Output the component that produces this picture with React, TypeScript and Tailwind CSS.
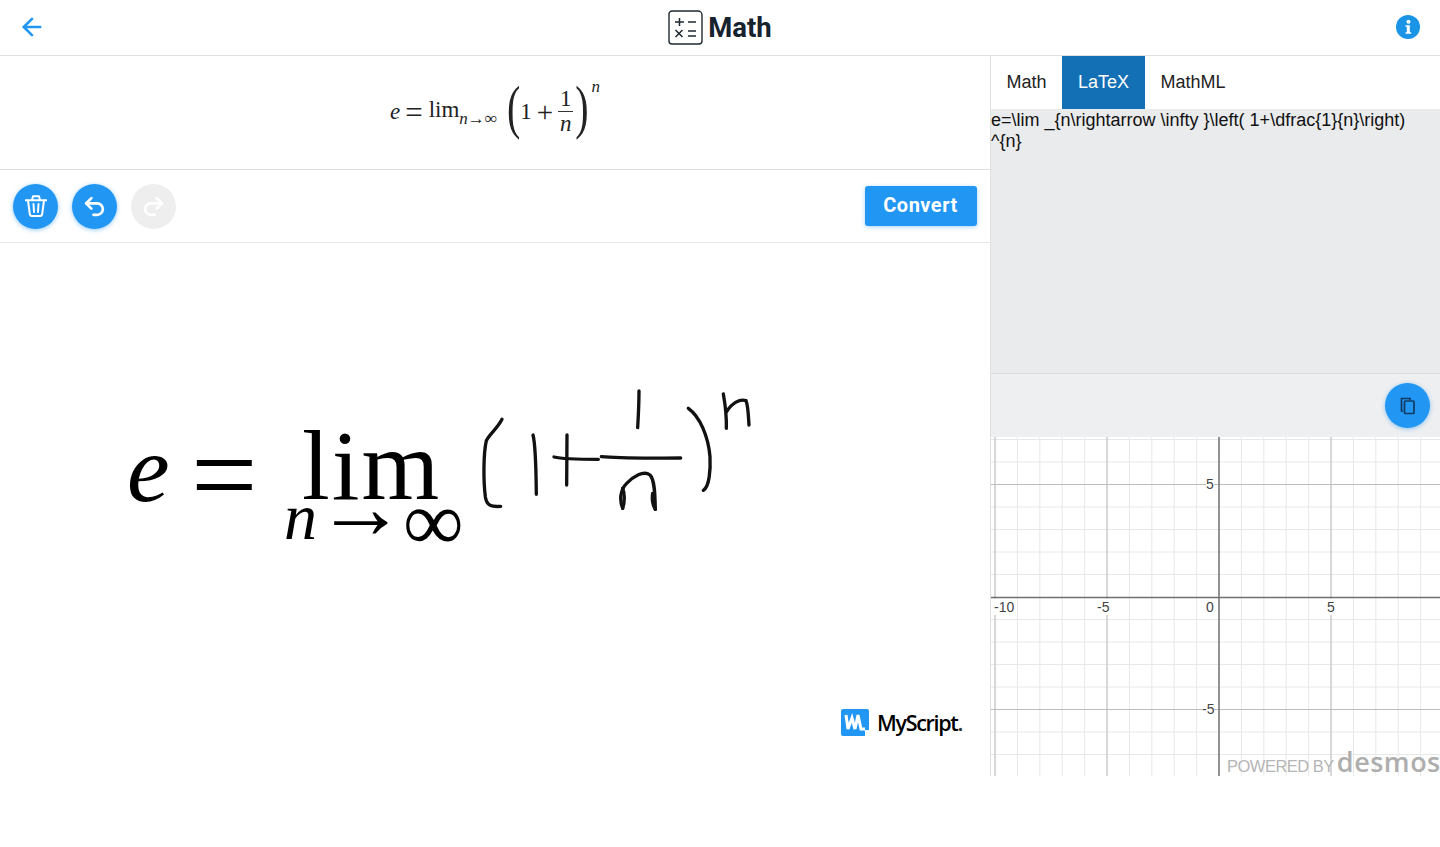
import React from 'react'
import { ArrowLeft, Redo2, Undo2 } from 'lucide-react'

function CalcIcon() {
  return (
    <svg width="35" height="35" viewBox="0 0 35 35" fill="none" stroke="#1f2933" strokeWidth="1.4">
      <path d="M4 1h26a4 4 0 0 1 4 4v26a3 3 0 0 1-3 3H4a3 3 0 0 1-3-3V4a3 3 0 0 1 3-3z" />
      <path d="M7 12h9M11.500 8v8M20 12h8M7.500 20l7 7M14.500 20l-7 7M20 21h8M20 26h8" strokeWidth="1.500" />
    </svg>
  )
}

function InfoIcon() {
  return (
    <svg width="24" height="24" viewBox="0 0 24 24">
      <circle cx="12" cy="12" r="12" fill="#1a94e6" />
      <circle cx="12.500" cy="6.800" r="2" fill="#fff" />
      <path d="M9.500 10.200h4.300v7h1.400v1.600H9.500v-1.600h1.300v-5.400H9.500z" fill="#fff" />
    </svg>
  )
}

function CopyIcon() {
  return (
    <svg width="16" height="18" viewBox="0 0 16 18" fill="none" stroke="#123a63" strokeWidth="1.700">
      <path d="M3 14H1.500V1.500H10V3" />
      <rect x="4.500" y="4" width="9.500" height="12.500" rx="1" />
    </svg>
  )
}

function TrashIcon() {
  return (
    <svg width="22" height="22" viewBox="0 0 22 22" fill="none" stroke="#fff" strokeWidth="2" strokeLinecap="round" strokeLinejoin="round">
      <path d="M0.800 5.300h20.400" />
      <path d="M7 5l1-3.800h6l1 3.800" />
      <path d="M3 5.500l1.800 13.500q.4 2 2.200 2h8q1.800 0 2.200-2L19 5.500" />
      <path d="M8.500 9l.5 8M13.500 9l-.5 8" />
    </svg>
  )
}

function Ink() {
  return (
    <svg
      className="absolute left-[470px] top-[137px]"
      width="300"
      height="150"
      viewBox="0 0 900 450"
      fill="none"
      stroke="#111"
      strokeWidth="10"
      strokeLinecap="round"
      strokeLinejoin="round"
    >
      <path d="M96 118C82 146 60 160 49 182C40 222 40 300 46 350C50 378 65 381 92 379" />
      <path d="M189 165C198 200 198 280 199 343" />
      <path d="M252 231C280 238 340 238 385 238" />
      <path d="M291 165C291 210 290 270 290 315" />
      <path d="M394 230C450 236 550 234 632 234" />
      <path d="M507 33C507 70 505 110 503 143" />
      <path d="M458 385C448 360 450 330 470 310C490 290 520 270 540 285C555 300 555 350 556 388" />
      <path d="M458 385C464 370 465 340 458 325M548 340C545 360 548 375 556 388" />
      <path d="M655 85C690 110 715 170 720 230C722 270 718 320 700 331" />
      <path d="M760 42C765 70 770 110 769 145M770 95C785 70 810 55 828 62C835 80 835 110 837 135" />
    </svg>
  )
}

function Preview() {
  return (
    <div className="h-[114px] border-b border-[#e0e0e0] flex items-center justify-center font-['Liberation_Serif',serif] text-[23px] text-[#222]">
      <i>e</i>
      <span className="text-[31px] leading-none ml-[5px] mr-[6px]">=</span>
      <span className="mt-[-5px]">lim</span>
      <i className="text-[17px] mt-[12px] whitespace-nowrap">n→∞</i>
      <span className="inline-block text-[40px] leading-none ml-[10px] mt-[-12px] scale-y-150">(</span>
      <span>1</span>
      <span className="text-[29px] leading-none mx-[5px]">+</span>
      <span className="flex flex-col items-center leading-[24px] w-[15px] mt-[-2px]">
        <span className="border-b border-[#333] w-full text-center">1</span>
        <i>n</i>
      </span>
      <span className="inline-block text-[40px] leading-none ml-[2px] mt-[-12px] scale-y-150">)</span>
      <i className="text-[17px] mb-[52px] ml-[3px]">n</i>
    </div>
  )
}

function Toolbar() {
  return (
    <div className="h-[73px] border-b border-[#e6e6e6] flex items-center pl-[13px] pr-[13.500px]">
      <button className="w-[45px] h-[45px] rounded-full bg-[#2196f3] shadow-[0_1px_4px_rgba(33,150,243,0.5)] flex items-center justify-center">
        <TrashIcon />
      </button>
      <button className="w-[45px] h-[45px] ml-[14px] rounded-full bg-[#2196f3] shadow-[0_1px_4px_rgba(33,150,243,0.5)] flex items-center justify-center text-white">
        <Undo2 size={25} strokeWidth={2.600} />
      </button>
      <button className="w-[45px] h-[45px] ml-[14px] rounded-full bg-[#eeeeee] flex items-center justify-center text-white">
        <Redo2 size={25} strokeWidth={2.600} />
      </button>
      <button className="ml-auto w-[112px] h-[40px] pb-[2px] rounded-[3px] bg-[#2196f3] shadow-[0_1px_4px_rgba(33,150,243,0.4)] text-white text-[20px] font-bold tracking-[0.5px] font-['Roboto',sans-serif]">
        Convert
      </button>
    </div>
  )
}

function Canvas() {
  return (
    <div className="relative flex-1 overflow-hidden font-['Liberation_Serif',serif] text-black">
      <i className="absolute left-[127px] top-[178px] text-[96px] leading-[96px]">e</i>
      <span className="absolute left-[191px] top-[174px] text-[118px] leading-[118px]">=</span>
      <span className="absolute left-[302px] top-[173px] text-[100px] leading-[100px] tracking-[2px]">lim</span>
      <i className="absolute left-[284px] top-[241px] text-[66px] leading-[66px]">n</i>
      <span className="absolute left-[316px] top-[220px] text-[90px] leading-[90px]">→</span>
      <span className="absolute left-[403px] top-[236px] text-[85px] leading-[85px]">∞</span>
      <Ink />
      <div className="absolute left-[841px] top-[462px] flex items-center">
        <svg width="28" height="27" viewBox="0 0 28 27">
          <path d="M2 0h24a2 2 0 0 1 2 2v19h-4v6H2a2 2 0 0 1-2-2V2a2 2 0 0 1 2-2z" fill="#2196f3" />
          <path d="M5 6l2 14 4-11 3 11 3-14 3 14h4" fill="none" stroke="#fff" strokeWidth="3" />
        </svg>
        <span className="ml-[8px] mt-[2px] font-['Open_Sans',sans-serif] font-semibold text-[21.500px] tracking-[-1.300px] text-black">
          MyScript<span className="text-[#333]">.</span>
        </span>
      </div>
    </div>
  )
}

const xMinor = [995, 1017.4, 1039.8, 1062.2, 1084.6, 1107, 1129.4, 1151.8, 1174.2, 1196.6, 1241.4, 1263.8, 1286.2, 1308.6, 1331, 1353.4, 1375.8, 1398.2, 1420.6]
const yMinor = [439.500, 462, 484.5, 507, 529.500, 552, 574.500, 619.500, 642, 664.500, 687, 709.500, 732, 754.500]
const xMajor = [995, 1107, 1331]
const yMajor = [484.5, 709.500]

function Graph() {
  return (
    <div className="relative flex-1 overflow-hidden font-['Liberation_Sans',sans-serif] text-[14px] text-[#444]">
      <svg width="449" height="339" viewBox="991 437 449 339" className="block">
        {xMinor.map((x) => (
          <line key={x} x1={x} x2={x} y1="437" y2="776" stroke="#e8e8e8" />
        ))}
        {yMinor.map((y) => (
          <line key={y} y1={y} y2={y} x1="991" x2="1440" stroke="#e8e8e8" />
        ))}
        {xMajor.map((x) => (
          <line key={x} x1={x} x2={x} y1="437" y2="776" stroke="#bdbdbd" />
        ))}
        {yMajor.map((y) => (
          <line key={y} y1={y} y2={y} x1="991" x2="1440" stroke="#bdbdbd" />
        ))}
        <line x1="1219" x2="1219" y1="437" y2="776" stroke="#6f6f6f" strokeWidth="1.500" />
        <line y1="597.500" y2="597.500" x1="991" x2="1440" stroke="#6f6f6f" strokeWidth="1.500" />
      </svg>
      <span className="absolute left-[3px] top-[162px] bg-white leading-4">-10</span>
      <span className="absolute left-[106px] top-[162px] bg-white leading-4">-5</span>
      <span className="absolute left-[215px] top-[162px] bg-white leading-4">0</span>
      <span className="absolute left-[336px] top-[162px] bg-white leading-4">5</span>
      <span className="absolute left-[215px] top-[39px] bg-white leading-4">5</span>
      <span className="absolute left-[211px] top-[264px] bg-white leading-4">-5</span>
      <div className="absolute left-[236px] bottom-0 flex items-baseline text-[#b5b5b5] whitespace-nowrap">
        <span className="text-[16.500px] leading-[20px] tracking-[-0.500px]">POWERED BY</span>
        <span className="font-['Open_Sans',sans-serif] text-[27px] leading-[24px] ml-[3px] font-semibold tracking-[0.5px] text-[#aeaeae]">desmos</span>
      </div>
    </div>
  )
}

function RightPanel() {
  return (
    <div className="flex-1 flex flex-col font-['Liberation_Sans',sans-serif]">
      <div className="h-[53px] flex text-[18px] text-[#222] bg-white">
        <div className="w-[71px] flex items-center justify-center">Math</div>
        <div className="w-[83px] flex items-center justify-center bg-[#1470b4] text-white">LaTeX</div>
        <div className="w-[96px] flex items-center justify-center">MathML</div>
      </div>
      <div className="h-[265px] bg-[#e9ebed] border-b border-[#dcdcdc] text-[18px] leading-[21px] text-[#111] pt-px">
        e=\lim _&#123;n\rightarrow \infty &#125;\left( 1+\dfrac&#123;1&#125;&#123;n&#125;\right)
        <br />
        ^&#123;n&#125;
      </div>
      <div className="h-[63px] bg-[#eeeff1] flex items-center justify-end pr-[10px] shrink-0">
        <button className="w-[45px] h-[45px] rounded-full bg-[#2196f3] shadow-[0_1px_4px_rgba(33,150,243,0.5)] flex items-center justify-center">
          <CopyIcon />
        </button>
      </div>
      <Graph />
    </div>
  )
}

export default function App() {
  return (
    <div className="w-[1440px] h-[847px] bg-white overflow-hidden">
      <header className="relative h-14 border-b border-[#e0e0e0] flex items-center justify-center">
        <ArrowLeft className="absolute left-[18px] top-[13px] text-[#2196f3]" size={28} strokeWidth={2.200} />
        <CalcIcon />
        <h1 className="ml-[5px] font-['Roboto',sans-serif] font-bold text-[27.500px] text-[#17222f]">Math</h1>
        <div className="absolute right-[20px] top-[15px]">
          <InfoIcon />
        </div>
      </header>
      <main className="flex h-[720px]">
        <section className="w-[991px] border-r border-[#e0e0e0] flex flex-col">
          <Preview />
          <Toolbar />
          <Canvas />
        </section>
        <RightPanel />
      </main>
    </div>
  )
}
